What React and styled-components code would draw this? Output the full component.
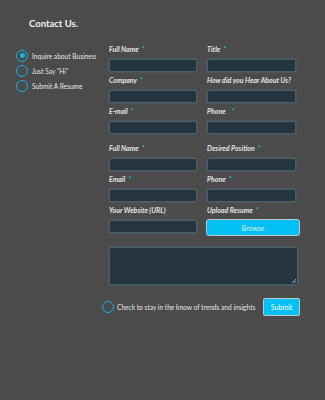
import React from 'react'
import styled, { createGlobalStyle } from 'styled-components'

const GlobalStyle = createGlobalStyle`
    html, body {
        margin: 0;
        padding: 0;
        background: #4b4b4b;
    }
    body {
        font-family: 'Lato', 'Open Sans', sans-serif;
        min-height: 400px;
    }
`

const Page = styled.div`
    padding-top: 18px;
    min-height: 382px;
`
const Heading = styled.h2`
    margin: 0 0 14px 29px;
    font-size: 9.5px;
    line-height: 12px;
    font-weight: 700;
    color: #f2f2f2;
`
const Main = styled.div`
    display: flex;
    gap: 13px;
`
const Side = styled.div`
    width: 80px;
    padding: 4px 0 0 16px;
    overflow: hidden;
    display: flex;
    flex-direction: column;
`
const RadioRow = styled.label`
    display: flex;
    align-items: center;
    gap: 4px;
    height: 15px;
    white-space: nowrap;
    font-size: 6.6px;
    color: #e6e6e6;
`
const Circle = styled.span`
    flex: none;
    box-sizing: border-box;
    width: ${p => p.size || 12}px;
    height: ${p => p.size || 12}px;
    border: 1.6px solid #12b4e0;
    border-radius: 50%;
    display: flex;
    align-items: center;
    justify-content: center;
    &::after {
        content: '';
        display: ${p => (p.checked ? 'block' : 'none')};
        width: 5px;
        height: 5px;
        border-radius: 50%;
        background: #12b4e0;
    }
`
const Form = styled.div`
    width: 189px;
    display: flex;
    flex-direction: column;
`
const Grid = styled.div`
    display: grid;
    grid-template-columns: 88px 89px;
    column-gap: 10px;
    row-gap: 3px;
    margin-bottom: ${p => p.mb || 0}px;
`
const Field = styled.div`
    display: flex;
    flex-direction: column;
`
const Label = styled.div`
    font-size: 7px;
    line-height: 11px;
    height: 11px;
    margin-bottom: 4px;
    font-weight: 700;
    font-style: italic;
    color: #e4e4e4;
    white-space: nowrap;
`
const Star = styled.span`
    color: #1cb8e6;
    margin-left: ${p => p.gap || 3}px;
`
const Input = styled.div`
    box-sizing: border-box;
    height: 13px;
    background: #25353f;
    border: 1px solid #465f6a;
    border-radius: 2px;
    box-shadow: 0 0 1.5px #5f7f8b;
`
const Browse = styled.button`
    box-sizing: border-box;
    width: 94px;
    height: 17px;
    margin: -1px 0 0 -1px;
    background: #00c1f2;
    border: 1px solid #b8c9cf;
    border-radius: 3px;
    color: #d8f4fd;
    font-family: inherit;
    font-size: 7px;
    padding: 0;
`
const TextArea = styled.div`
    position: relative;
    box-sizing: border-box;
    width: 189px;
    height: 38px;
    margin-top: 11px;
    background: #25353f;
    border: 1px solid #465f6a;
    border-radius: 2px;
    box-shadow: 0 0 1.5px #5f7f8b;
    &::after {
        content: '';
        position: absolute;
        right: 1px;
        bottom: 1px;
        width: 4px;
        height: 4px;
        background: linear-gradient(135deg, transparent 45%, #8aa0a8 45%, #8aa0a8 55%, transparent 55%, transparent 70%, #8aa0a8 70%, #8aa0a8 80%, transparent 80%);
    }
`
const Footer = styled.div`
    display: flex;
    align-items: center;
    margin: 13px -2px 0 -7px;
`
const CheckText = styled.span`
    margin-left: 3px;
    font-size: 6.6px;
    color: #e6e6e6;
    white-space: nowrap;
`
const Submit = styled.button`
    box-sizing: border-box;
    margin-left: auto;
    width: 37px;
    height: 18px;
    background: #00c1f2;
    border: 1px solid #b8c9cf;
    border-radius: 2px;
    color: #ffffff;
    font-family: inherit;
    font-size: 7px;
    padding: 0;
`

const topFields = [
    ['Full Name', true],
    ['Title', true],
    ['Company', true],
    ['How did you Hear About Us?', false],
    ['E-mail', true],
    ['Phone', true, 6],
]
const resumeFields = [
    ['Full Name', true],
    ['Desired Position', true],
    ['Email', true],
    ['Phone', true],
    ['Your Website (URL)', false],
]

function FieldBox({ label, required, gap }) {
    return (
        <Field>
            <Label>
                {label}
                {required && <Star gap={gap}>*</Star>}
            </Label>
            <Input />
        </Field>
    )
}

export default function App() {
    return (
        <Page>
            <GlobalStyle />
            <Heading>Contact Us.</Heading>
            <Main>
                <Side>
                    <RadioRow><Circle checked />Inquire about Business</RadioRow>
                    <RadioRow><Circle />Just Say "Hi"</RadioRow>
                    <RadioRow><Circle />Submit A Resume</RadioRow>
                </Side>
                <Form>
                    <Grid mb={9}>
                        {topFields.map(([l, r, g], i) => (
                            <FieldBox key={i} label={l} required={r} gap={g} />
                        ))}
                    </Grid>
                    <Grid>
                        {resumeFields.map(([l, r], i) => (
                            <FieldBox key={i} label={l} required={r} />
                        ))}
                        <Field>
                            <Label>Upload Resume<Star>*</Star></Label>
                            <Browse>Browse</Browse>
                        </Field>
                    </Grid>
                    <TextArea />
                    <Footer>
                        <Circle size={12} />
                        <CheckText>Check to stay in the know of trends and insights</CheckText>
                        <Submit>Submit</Submit>
                    </Footer>
                </Form>
            </Main>
        </Page>
    )
}
